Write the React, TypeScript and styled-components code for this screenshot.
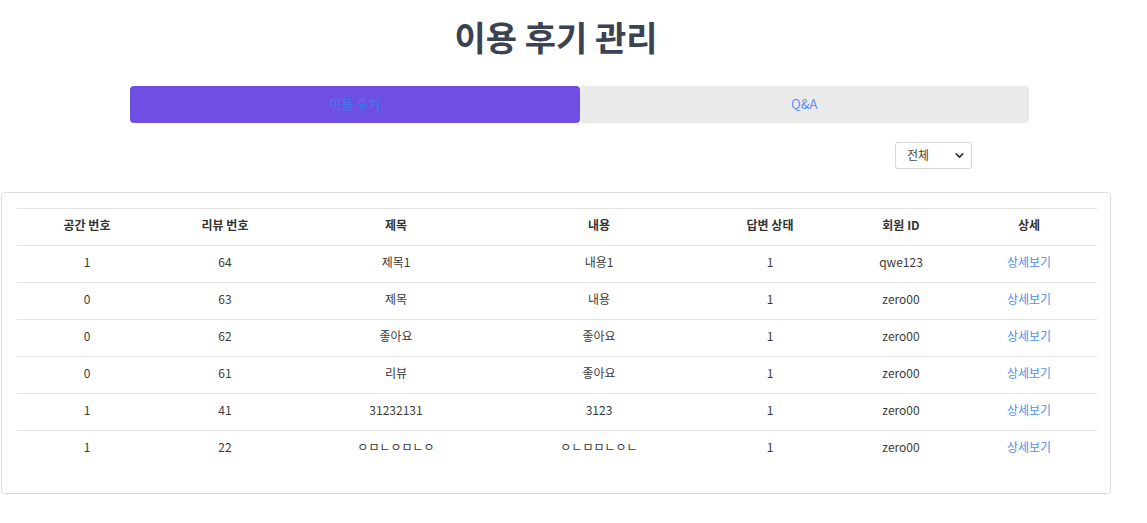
import React from "react";
import styled, { createGlobalStyle } from "styled-components";
import { ChevronDown } from "lucide-react";

const GlobalStyle = createGlobalStyle`
  body {
    margin: 0;
    background: #fff;
    font-family: "Noto Sans CJK KR", "Noto Sans", "Liberation Sans", sans-serif;
    color: #333;
  }
`;

const Page = styled.div`
  width: 1112px;
`;

const Title = styled.h1`
  margin: 0;
  padding-top: 13px;
  height: 48px;
  line-height: 48px;
  text-align: center;
  font-size: 34px;
  font-weight: 700;
  color: #3b4250;
`;

const Tabs = styled.div`
  display: flex;
  margin: 25px 0 0 130px;
  width: 899px;
  height: 37px;
`;

const Tab = styled.button<{ $active?: boolean }>`
  flex: 1;
  border: none;
  border-radius: 4px;
  background: ${(p) => (p.$active ? "#6f4fe3" : "#eaeaea")};
  color: ${(p) => (p.$active ? "#3a7cf2" : "#5b8ef2")};
  font-family: inherit;
  font-size: 13px;
  cursor: pointer;
  padding: 0 0 3px;
`;

const FilterRow = styled.div`
  display: flex;
  justify-content: flex-end;
  width: 972px;
  margin-top: 19px;
`;

const SelectWrap = styled.div`
  position: relative;
  width: 77px;
  height: 27px;
`;

const Select = styled.select`
  display: block;
  appearance: none;
  width: 100%;
  height: 100%;
  border: 1px solid #d6d6d6;
  border-radius: 3px;
  background: #fff;
  padding: 0 0 3px 11px;
  font-family: inherit;
  font-size: 12px;
  color: #444;
`;

const Chevron = styled.span`
  position: absolute;
  right: 6px;
  top: 7px;
  pointer-events: none;
  color: #333;
  display: flex;
`;

const Card = styled.div`
  margin: 23px 0 0 1px;
  width: 1110px;
  box-sizing: border-box;
  border: 1px solid #dcdcdc;
  border-radius: 4px;
  padding: 15px 14px 25px 15px;
`;

const Table = styled.table`
  width: 1080px;
  border-collapse: collapse;
  table-layout: fixed;
  font-size: 12px;
`;

const Th = styled.th<{ $w: number }>`
  width: ${(p) => p.$w}px;
  height: 37px;
  border-top: 1px solid #e2e2e2;
  border-bottom: 1px solid #e2e2e2;
  font-weight: 700;
  color: #333;
  text-align: center;
  padding: 0 0 5px;
  box-sizing: border-box;
`;

const Td = styled.td`
  height: 37px;
  text-align: center;
  padding: 0 0 5px;
  box-sizing: border-box;
  color: #3a3a3a;
`;

const Tr = styled.tr<{ $last?: boolean }>`
  border-bottom: ${(p) => (p.$last ? "none" : "1px solid #e2e2e2")};
`;

const DetailLink = styled.a`
  color: #4a8ff0;
  text-decoration: none;
  cursor: pointer;
`;

const columns = [
  { label: "공간 번호", w: 140 },
  { label: "리뷰 번호", w: 136 },
  { label: "제목", w: 206 },
  { label: "내용", w: 200 },
  { label: "답변 상태", w: 142 },
  { label: "회원 ID", w: 120 },
  { label: "상세", w: 136 },
];

const reviews = [
  { space: 1, no: 64, title: "제목1", content: "내용1", status: 1, user: "qwe123" },
  { space: 0, no: 63, title: "제목", content: "내용", status: 1, user: "zero00" },
  { space: 0, no: 62, title: "좋아요", content: "좋아요", status: 1, user: "zero00" },
  { space: 0, no: 61, title: "리뷰", content: "좋아요", status: 1, user: "zero00" },
  { space: 1, no: 41, title: "31232131", content: "3123", status: 1, user: "zero00" },
  { space: 1, no: 22, title: "ㅇㅁㄴㅇㅁㄴㅇ", content: "ㅇㄴㅁㅁㄴㅇㄴ", status: 1, user: "zero00" },
];

export default function App() {
  return (
    <Page>
      <GlobalStyle />
      <Title>이용 후기 관리</Title>
      <Tabs>
        <Tab $active>이용 후기</Tab>
        <Tab>Q&amp;A</Tab>
      </Tabs>
      <FilterRow>
        <SelectWrap>
          <Select defaultValue="all">
            <option value="all">전체</option>
            <option value="done">답변 완료</option>
            <option value="wait">미답변</option>
          </Select>
          <Chevron>
            <ChevronDown size={13} strokeWidth={3.2} />
          </Chevron>
        </SelectWrap>
      </FilterRow>
      <Card>
        <Table>
          <thead>
            <tr>
              {columns.map((c) => (
                <Th key={c.label} $w={c.w}>
                  {c.label}
                </Th>
              ))}
            </tr>
          </thead>
          <tbody>
            {reviews.map((r, i) => (
              <Tr key={r.no} $last={i === reviews.length - 1}>
                <Td>{r.space}</Td>
                <Td>{r.no}</Td>
                <Td>{r.title}</Td>
                <Td>{r.content}</Td>
                <Td>{r.status}</Td>
                <Td>{r.user}</Td>
                <Td>
                  <DetailLink>상세보기</DetailLink>
                </Td>
              </Tr>
            ))}
          </tbody>
        </Table>
      </Card>
    </Page>
  );
}
